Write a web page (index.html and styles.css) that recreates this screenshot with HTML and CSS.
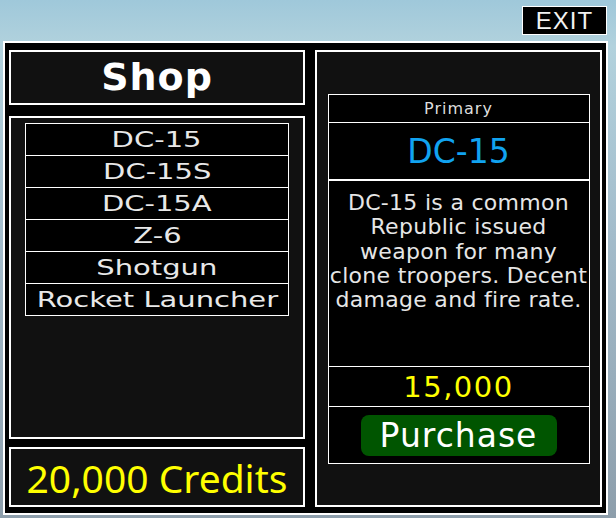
FILE: index.html
```html
<!DOCTYPE html>
<html lang="en">

<head>
    <meta charset="UTF-8">
    <meta name="viewport" content="width=device-width, initial-scale=1.0">
    <title>Shop</title>
    <link rel="stylesheet" href="styles.css">
</head>

<body>
    <div class="topbar">
        <button class="exit">EXIT</button>
    </div>

    <main class="shop">
        <section class="left">
            <div class="title">Shop</div>

            <div class="list">
                <ul class="weapons">
                    <li class="selected"><span>DC-15</span></li>
                    <li><span>DC-15S</span></li>
                    <li><span>DC-15A</span></li>
                    <li><span>Z-6</span></li>
                    <li><span>Shotgun</span></li>
                    <li><span>Rocket Launcher</span></li>
                </ul>
            </div>

            <div class="credits">20,000 Credits</div>
        </section>

        <section class="details">
            <div class="card">
                <div class="kind">Primary</div>
                <div class="name">DC-15</div>
                <p class="desc">DC-15 is a common<br>Republic issued<br>weapon for many<br>clone troopers. Decent<br>damage and fire rate.</p>
                <div class="price">15,000</div>
                <div class="buy">
                    <button class="purchase">Purchase</button>
                </div>
            </div>
        </section>
    </main>
</body>

</html>
```

FILE: styles.css
```css
* {
    margin: 0;
    padding: 0;
    box-sizing: border-box;
}

body {
    font-family: 'DejaVu Sans', sans-serif;
    background: linear-gradient(180deg, #9fc8da 0%, #b2d2dd 9%, #a3bccb 45%, #8d9eab 100%);
    color: #e8e8e8;
    height: 518px;
    overflow: hidden;
}

/* exit button, top right */
.topbar {
    display: flex;
    justify-content: flex-end;
    padding: 6px 9px 0 0;
    height: 41px;
}

.exit {
    width: 85px;
    height: 29px;
    background: #000;
    border: 1px solid #fff;
    color: #f2f2f2;
    font-family: 'Liberation Sans', Arial, sans-serif;
    font-size: 24px;
    letter-spacing: 1px;
    line-height: 27px;
    cursor: pointer;
}

/* main window */
.shop {
    margin-left: 3px;
    width: 605px;
    height: 474px;
    background: #000;
    border: 2px solid #fff;
    padding: 7px 4px 6px;
    display: flex;
    gap: 10px;
}

.left {
    width: 296px;
    display: flex;
    flex-direction: column;
}

.title,
.list,
.credits,
.details {
    background: #111;
    border: 2px solid #fff;
}

.title {
    height: 55px;
    display: flex;
    align-items: center;
    justify-content: center;
    padding-bottom: 2px;
    font-size: 38px;
    font-weight: bold;
    letter-spacing: 1px;
    color: #fff;
}

.list {
    height: 323px;
    margin-top: 11px;
    padding: 5px 14px 0;
}

.weapons {
    list-style: none;
    border: 1px solid #fff;
    border-top: none;
}

.weapons li {
    height: 32px;
    border-top: 1px solid #fff;
    background: #000;
    display: flex;
    align-items: center;
    justify-content: center;
    font-size: 21px;
    cursor: pointer;
}

/* wide display lettering for the weapon names */
.weapons li span {
    display: inline-block;
    transform: scaleX(1.38);
    white-space: nowrap;
}

.credits {
    height: 60px;
    margin-top: 8px;
    display: flex;
    align-items: center;
    justify-content: center;
    font-family: 'Noto Sans', sans-serif;
    font-size: 39px;
    color: #ffff00;
}

/* item details */
.details {
    width: 287px;
    padding-top: 42px;
}

.card {
    width: 262px;
    margin: 0 auto;
    border: 1px solid #fff;
    background: #000;
    text-align: center;
}

.kind {
    height: 27px;
    display: flex;
    align-items: center;
    justify-content: center;
    font-size: 16px;
    letter-spacing: 1px;
    color: #ddd;
}

.name {
    height: 57px;
    border-top: 1px solid #fff;
    display: flex;
    align-items: center;
    justify-content: center;
    font-size: 33px;
    color: #11a3f0;
}

.desc {
    height: 187px;
    border-top: 2px solid #fff;
    padding-top: 10px;
    font-size: 22px;
    line-height: 24.3px;
    letter-spacing: 0.3px;
    white-space: nowrap;
    color: #e6e6e6;
}

.price {
    height: 40px;
    border-top: 1px solid #fff;
    display: flex;
    align-items: center;
    justify-content: center;
    font-size: 29px;
    letter-spacing: 1.5px;
    color: #ffff00;
}

.buy {
    height: 57px;
    border-top: 1px solid #fff;
    padding-top: 8px;
}

.purchase {
    width: 196px;
    height: 41px;
    border: none;
    border-radius: 8px;
    background: #005500;
    color: #fff;
    font-family: 'DejaVu Sans', sans-serif;
    font-size: 33px;
    letter-spacing: 1px;
    line-height: 41px;
    cursor: pointer;
}
```
